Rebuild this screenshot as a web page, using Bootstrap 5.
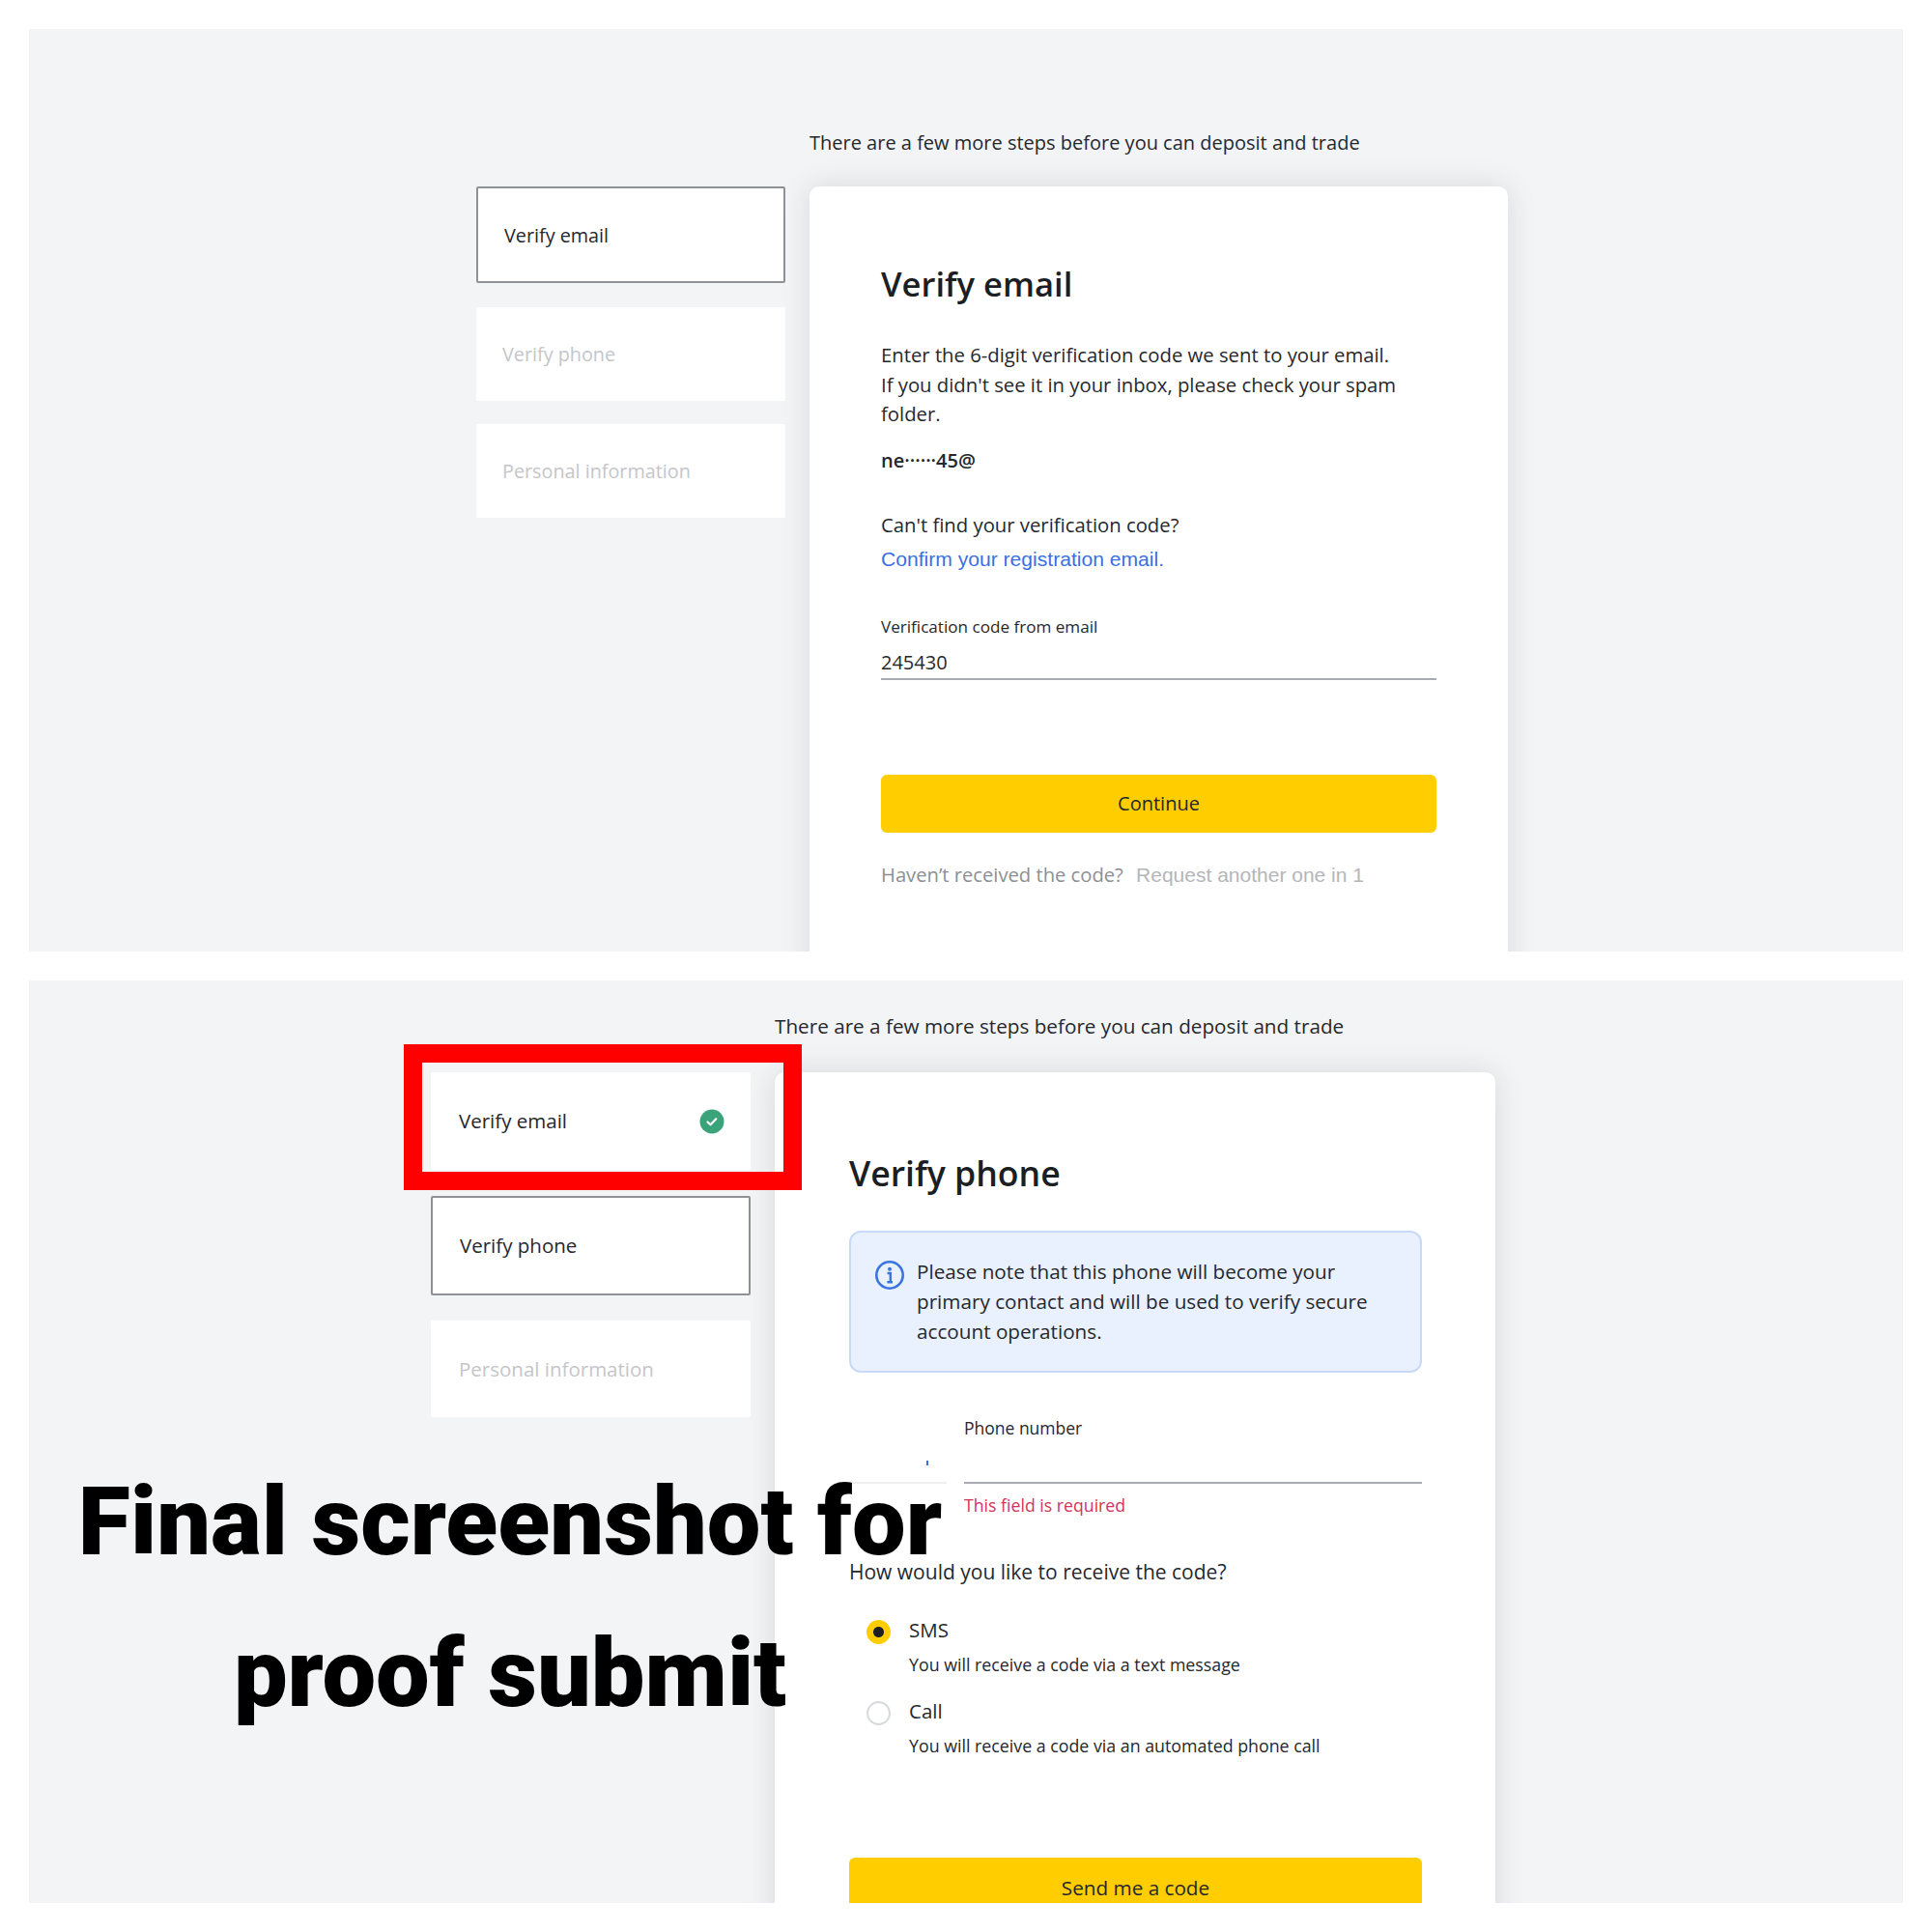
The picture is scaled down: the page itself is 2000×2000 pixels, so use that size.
<!DOCTYPE html>
<html lang="en">
<head>
    <meta charset="UTF-8">
    <meta name="viewport" content="width=device-width, initial-scale=1.0">
    <title>Verify account</title>
    <link rel="stylesheet" href="https://cdn.jsdelivr.net/npm/bootstrap@5.3.0/dist/css/bootstrap.min.css">
    <style>
        body { background: #fff; padding: 30px; font-family: "Open Sans", "Noto Sans", sans-serif; color: #25282d; }
        .shot-panel { height: 955px; background: #f3f4f6; overflow: hidden; position: relative; }
        .shot-panel + .shot-panel { margin-top: 30px; }
        .wizard { display: grid; }
        .flow-email .wizard { grid-template-columns: 320px 723px; column-gap: 25px; margin: 103px 0 0 463px; }
        .flow-phone .wizard { grid-template-columns: 331px 746px; column-gap: 25px; margin: 32px 0 0 416px; }
        .intro-line { grid-column: 2; font-size: 20px; line-height: 30px; margin-bottom: 30px; white-space: nowrap; }
        .flow-phone .intro-line { font-size: 20.7px; margin-bottom: 33px; }
        .step-item { background: #fff; font-size: 19.8px; padding: 0 27px; border-radius: 2px; color: #c4c6ca; }
        .step-item.step-active { border: 2px solid #8f9196; color: #25282d; padding: 2px 27px 0; }
        .step-item.step-done { color: #25282d; }
        .flow-email .step-item { height: 97px; margin-bottom: 24px; }
        .flow-email .step-item.step-active { height: 100px; margin-bottom: 25px; }
        .flow-phone .step-item { height: 100px; margin-bottom: 27px; font-size: 20.5px; padding: 0 27px 0 29px; }
        .flow-phone .step-item.step-done { height: 101px; }
        .flow-phone .step-item.step-active { height: 103px; margin-bottom: 26px; padding: 0 28px; }
        .main-card { background: #fff; border: 0; border-radius: 10px; box-shadow: 0 0 30px rgba(30, 35, 50, .13); }
        .flow-email .main-card { height: 900px; padding: 77px 74px 0; }
        .flow-phone .main-card { height: 900px; padding: 80px 76px 0 77px; }
        .main-title { font-size: 34.6px; font-weight: 600; line-height: 48px; margin: 0; color: #1b1e22; }
        .flow-phone .main-title { font-size: 35.6px; }
        .body-copy { font-size: 20.3px; line-height: 30.5px; margin: 34px 0 0; }
        .masked-mail { font-size: 20px; font-weight: 600; line-height: 30px; margin: 18px 0 0; }
        .find-line { font-size: 20.3px; line-height: 30.5px; margin: 36px 0 0; }
        .help-link { font-family: "Liberation Sans", sans-serif; font-size: 21.1px; line-height: 30px; color: #3a6fe2; text-decoration: none; display: block; margin-top: 6px; }
        .code-label { font-size: 17.1px; line-height: 24px; display: block; margin: 0; }
        .flow-email .code-label { margin-top: 43px; }
        .flow-phone .code-label { font-size: 17.5px; }
        .code-input { font-size: 20px; line-height: 30px; padding: 0 0 1px; margin-top: 10px; border: 0; border-bottom: 2px solid #a9abb3; border-radius: 0; color: #25282d; background: transparent; box-shadow: none; }
        .brand-btn { background: #ffcd00; border: 0; border-radius: 6px; height: 60px; font-size: 20px; color: #25282d; }
        .flow-email .brand-btn { margin-top: 98px; }
        .flow-phone .brand-btn { margin-top: 103px; height: 64px; font-size: 20.7px; }
        .muted-note { font-size: 20.2px; line-height: 30px; color: #8c8f94; margin: 28px 0 0; }
        .muted-note span { font-family: "Liberation Sans", sans-serif; font-size: 21px; color: #b4b6ba; margin-left: 8px; }
        .info-box { background: #e9f0fe; border: 2px solid #c9daf8; border-radius: 12px; padding: 25px 24px 26px; height: 147px; margin: 36px 0 0; color: #25282d; font-size: 20.7px; line-height: 31px; }
        .info-box svg { flex: none; margin: 3px 12px 0 0; }
        .phone-row { display: flex; column-gap: 18px; margin-top: 45px; }
        .dial-col { width: 101px; flex: none; border-bottom: 2px solid #eeeff1; height: 70px; position: relative; }
        .dial-tick { position: absolute; left: 80px; top: 46px; width: 2px; height: 5px; background: #3a6fe2; }
        .phone-col { flex: 1; }
        .phone-line { border-bottom: 2px solid #a9abb3; height: 46px; }
        .error-note { font-size: 17.7px; line-height: 24px; color: #d0355b; margin-top: 10px; }
        .ask-line { font-size: 21px; line-height: 30px; margin: 42px 0 0; }
        .radio-row { display: flex; column-gap: 19px; margin: 30px 0 0; padding: 0 0 0 18px; min-height: 0; }
        .radio-row + .radio-row { margin-top: 20px; }
        .radio-row .form-check-input { width: 25px; height: 25px; flex: none; margin: 5px 0 0 0; float: none; border: 2px solid #d8d9dc; box-shadow: none; }
        .radio-row .form-check-input:checked { background-color: #ffcd00; border-color: #ffcd00; background-image: radial-gradient(circle, #1c1e22 0 5px, transparent 6px); }
        .radio-name { font-size: 20.5px; line-height: 30px; display: block; }
        .radio-sub { font-size: 17.8px; line-height: 26px; display: block; margin-top: 8px; }
        .stamp-box { position: absolute; left: 388px; top: 66px; width: 412px; height: 151px; border: 19px solid #ff0000; }
        .stamp-title { position: absolute; left: 0; top: 482px; width: 996px; text-align: center; font-family: Roboto, sans-serif; font-weight: 900; font-size: 99px; line-height: 157px; color: #000; }
    </style>
</head>
<body>
<div class="shot-panel flow-email">
    <div class="wizard">
        <div class="intro-line">There are a few more steps before you can deposit and trade</div>
        <div>
            <div class="step-item step-active d-flex align-items-center">Verify email</div>
            <div class="step-item d-flex align-items-center">Verify phone</div>
            <div class="step-item d-flex align-items-center">Personal information</div>
        </div>
        <div class="card main-card">
            <h2 class="main-title">Verify email</h2>
            <p class="body-copy">Enter the 6-digit verification code we sent to your email.<br>If you didn't see it in your inbox, please check your spam folder.</p>
            <p class="masked-mail">ne······45@</p>
            <p class="find-line">Can't find your verification code?</p>
            <a class="help-link" href="#">Confirm your registration email.</a>
            <label class="code-label" for="emailCode">Verification code from email</label>
            <input id="emailCode" class="form-control code-input" value="245430" readonly>
            <button class="btn brand-btn w-100" type="button">Continue</button>
            <p class="muted-note">Haven’t received the code? <span>Request another one in 1</span></p>
        </div>
    </div>
</div>
<div class="shot-panel flow-phone">
    <div class="wizard">
        <div class="intro-line">There are a few more steps before you can deposit and trade</div>
        <div>
            <div class="step-item step-done d-flex align-items-center justify-content-between">Verify email
                <svg width="26" height="26" viewBox="0 0 26 26"><circle cx="13" cy="13" r="12.5" fill="#3aa37a"/><path d="M8.5 13.5l3 2.8 5.8-6" fill="none" stroke="#fff" stroke-width="2.2" stroke-linecap="round" stroke-linejoin="round"/></svg>
            </div>
            <div class="step-item step-active d-flex align-items-center">Verify phone</div>
            <div class="step-item d-flex align-items-center">Personal information</div>
        </div>
        <div class="card main-card">
            <h2 class="main-title">Verify phone</h2>
            <div class="alert info-box d-flex">
                <svg width="32" height="32" viewBox="0 0 32 32"><circle cx="16" cy="16" r="13.7" fill="none" stroke="#3a74de" stroke-width="2.6"/><circle cx="16" cy="9.8" r="2" fill="#3a74de"/><path d="M13.6 14h3.2v9M13.4 23.2h5.6" fill="none" stroke="#3a74de" stroke-width="2.4"/></svg>
                <div>Please note that this phone will become your primary contact and will be used to verify secure account operations.</div>
            </div>
            <div class="phone-row">
                <div class="dial-col"><span class="dial-tick"></span></div>
                <div class="phone-col">
                    <label class="code-label">Phone number</label>
                    <div class="phone-line"></div>
                    <div class="error-note">This field is required</div>
                </div>
            </div>
            <p class="ask-line">How would you like to receive the code?</p>
            <div class="radio-row">
                <input class="form-check-input" type="radio" name="channel" checked>
                <label><span class="radio-name">SMS</span><span class="radio-sub">You will receive a code via a text message</span></label>
            </div>
            <div class="radio-row">
                <input class="form-check-input" type="radio" name="channel">
                <label><span class="radio-name">Call</span><span class="radio-sub">You will receive a code via an automated phone call</span></label>
            </div>
            <button class="btn brand-btn w-100" type="button">Send me a code</button>
        </div>
    </div>
    <div class="stamp-box"></div>
    <div class="stamp-title">Final screenshot for<br>proof submit</div>
</div>
</body>
</html>
